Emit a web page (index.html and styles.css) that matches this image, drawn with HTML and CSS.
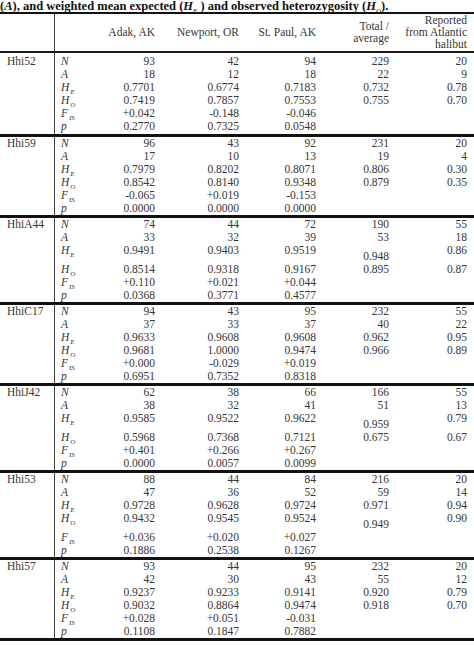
FILE: index.html
```html
<!DOCTYPE html>
<html>
<head>
<meta charset="utf-8">
<link rel="stylesheet" href="styles.css">
</head>
<body>
<div class="page">
  <div class="title">(<i>A</i>), and weighted mean expected (<i>H</i><sub>E</sub> ) and observed heterozygosity (<i>H</i><sub>O</sub>).</div>
  <div class="head">
    <div class="c name"></div>
    <div class="c par"></div>
    <div class="c h">Adak, AK</div>
    <div class="c h">Newport, OR</div>
    <div class="c h">St. Paul, AK</div>
    <div class="c h">Total /<br>average</div>
    <div class="c h">Reported<br>from Atlantic<br>halibut</div>
  </div>

  <div class="blk first">
    <div class="name">Hhi52</div>
    <div class="par"><i>N</i></div><div class="v">93</div><div class="v">42</div><div class="v">94</div><div class="v">229</div><div class="v">20</div>
    <div class="par"><i>A</i></div><div class="v">18</div><div class="v">12</div><div class="v">18</div><div class="v">22</div><div class="v">9</div>
    <div class="par"><i>H</i><sub>E</sub></div><div class="v">0.7701</div><div class="v">0.6774</div><div class="v">0.7183</div><div class="v">0.732</div><div class="v">0.78</div>
    <div class="par"><i>H</i><sub>O</sub></div><div class="v">0.7419</div><div class="v">0.7857</div><div class="v">0.7553</div><div class="v">0.755</div><div class="v">0.70</div>
    <div class="par"><i>F</i><sub>IS</sub></div><div class="v">+0.042</div><div class="v">-0.148</div><div class="v">-0.046</div><div class="v"></div><div class="v"></div>
    <div class="par"><i>p</i></div><div class="v">0.2770</div><div class="v">0.7325</div><div class="v">0.0548</div><div class="v"></div><div class="v"></div>
  </div>

  <div class="blk">
    <div class="name">Hhi59</div>
    <div class="par"><i>N</i></div><div class="v">96</div><div class="v">43</div><div class="v">92</div><div class="v">231</div><div class="v">20</div>
    <div class="par"><i>A</i></div><div class="v">17</div><div class="v">10</div><div class="v">13</div><div class="v">19</div><div class="v">4</div>
    <div class="par"><i>H</i><sub>E</sub></div><div class="v">0.7979</div><div class="v">0.8202</div><div class="v">0.8071</div><div class="v">0.806</div><div class="v">0.30</div>
    <div class="par"><i>H</i><sub>O</sub></div><div class="v">0.8542</div><div class="v">0.8140</div><div class="v">0.9348</div><div class="v">0.879</div><div class="v">0.35</div>
    <div class="par"><i>F</i><sub>IS</sub></div><div class="v">-0.065</div><div class="v">+0.019</div><div class="v">-0.153</div><div class="v"></div><div class="v"></div>
    <div class="par"><i>p</i></div><div class="v">0.0000</div><div class="v">0.0000</div><div class="v">0.0000</div><div class="v"></div><div class="v"></div>
  </div>

  <div class="blk tall3">
    <div class="name">HhiA44</div>
    <div class="par"><i>N</i></div><div class="v">74</div><div class="v">44</div><div class="v">72</div><div class="v">190</div><div class="v">55</div>
    <div class="par"><i>A</i></div><div class="v">33</div><div class="v">32</div><div class="v">39</div><div class="v">53</div><div class="v">18</div>
    <div class="par"><i>H</i><sub>E</sub></div><div class="v">0.9491</div><div class="v">0.9403</div><div class="v">0.9519</div><div class="v lo">0.948</div><div class="v">0.86</div>
    <div class="par"><i>H</i><sub>O</sub></div><div class="v">0.8514</div><div class="v">0.9318</div><div class="v">0.9167</div><div class="v">0.895</div><div class="v">0.87</div>
    <div class="par"><i>F</i><sub>IS</sub></div><div class="v">+0.110</div><div class="v">+0.021</div><div class="v">+0.044</div><div class="v"></div><div class="v"></div>
    <div class="par"><i>p</i></div><div class="v">0.0368</div><div class="v">0.3771</div><div class="v">0.4577</div><div class="v"></div><div class="v"></div>
  </div>

  <div class="blk">
    <div class="name">HhiC17</div>
    <div class="par"><i>N</i></div><div class="v">94</div><div class="v">43</div><div class="v">95</div><div class="v">232</div><div class="v">55</div>
    <div class="par"><i>A</i></div><div class="v">37</div><div class="v">33</div><div class="v">37</div><div class="v">40</div><div class="v">22</div>
    <div class="par"><i>H</i><sub>E</sub></div><div class="v">0.9633</div><div class="v">0.9608</div><div class="v">0.9608</div><div class="v">0.962</div><div class="v">0.95</div>
    <div class="par"><i>H</i><sub>O</sub></div><div class="v">0.9681</div><div class="v">1.0000</div><div class="v">0.9474</div><div class="v">0.966</div><div class="v">0.89</div>
    <div class="par"><i>F</i><sub>IS</sub></div><div class="v">+0.000</div><div class="v">-0.029</div><div class="v">+0.019</div><div class="v"></div><div class="v"></div>
    <div class="par"><i>p</i></div><div class="v">0.6951</div><div class="v">0.7352</div><div class="v">0.8318</div><div class="v"></div><div class="v"></div>
  </div>

  <div class="blk tall3">
    <div class="name">HhiJ42</div>
    <div class="par"><i>N</i></div><div class="v">62</div><div class="v">38</div><div class="v">66</div><div class="v">166</div><div class="v">55</div>
    <div class="par"><i>A</i></div><div class="v">38</div><div class="v">32</div><div class="v">41</div><div class="v">51</div><div class="v">13</div>
    <div class="par"><i>H</i><sub>E</sub></div><div class="v">0.9585</div><div class="v">0.9522</div><div class="v">0.9622</div><div class="v lo">0.959</div><div class="v">0.79</div>
    <div class="par"><i>H</i><sub>O</sub></div><div class="v">0.5968</div><div class="v">0.7368</div><div class="v">0.7121</div><div class="v">0.675</div><div class="v">0.67</div>
    <div class="par"><i>F</i><sub>IS</sub></div><div class="v">+0.401</div><div class="v">+0.266</div><div class="v">+0.267</div><div class="v"></div><div class="v"></div>
    <div class="par"><i>p</i></div><div class="v">0.0000</div><div class="v">0.0057</div><div class="v">0.0099</div><div class="v"></div><div class="v"></div>
  </div>

  <div class="blk tall4">
    <div class="name">Hhi53</div>
    <div class="par"><i>N</i></div><div class="v">88</div><div class="v">44</div><div class="v">84</div><div class="v">216</div><div class="v">20</div>
    <div class="par"><i>A</i></div><div class="v">47</div><div class="v">36</div><div class="v">52</div><div class="v">59</div><div class="v">14</div>
    <div class="par"><i>H</i><sub>E</sub></div><div class="v">0.9728</div><div class="v">0.9628</div><div class="v">0.9724</div><div class="v">0.971</div><div class="v">0.94</div>
    <div class="par"><i>H</i><sub>O</sub></div><div class="v">0.9432</div><div class="v">0.9545</div><div class="v">0.9524</div><div class="v lo">0.949</div><div class="v">0.90</div>
    <div class="par"><i>F</i><sub>IS</sub></div><div class="v">+0.036</div><div class="v">+0.020</div><div class="v">+0.027</div><div class="v"></div><div class="v"></div>
    <div class="par"><i>p</i></div><div class="v">0.1886</div><div class="v">0.2538</div><div class="v">0.1267</div><div class="v"></div><div class="v"></div>
  </div>

  <div class="blk last">
    <div class="name">Hhi57</div>
    <div class="par"><i>N</i></div><div class="v">93</div><div class="v">44</div><div class="v">95</div><div class="v">232</div><div class="v">20</div>
    <div class="par"><i>A</i></div><div class="v">42</div><div class="v">30</div><div class="v">43</div><div class="v">55</div><div class="v">12</div>
    <div class="par"><i>H</i><sub>E</sub></div><div class="v">0.9237</div><div class="v">0.9233</div><div class="v">0.9141</div><div class="v">0.920</div><div class="v">0.79</div>
    <div class="par"><i>H</i><sub>O</sub></div><div class="v">0.9032</div><div class="v">0.8864</div><div class="v">0.9474</div><div class="v">0.918</div><div class="v">0.70</div>
    <div class="par"><i>F</i><sub>IS</sub></div><div class="v">+0.028</div><div class="v">+0.051</div><div class="v">-0.031</div><div class="v"></div><div class="v"></div>
    <div class="par"><i>p</i></div><div class="v">0.1108</div><div class="v">0.1847</div><div class="v">0.7882</div><div class="v"></div><div class="v"></div>
  </div>
</div>
</body>
</html>
```
FILE: styles.css
```css
html, body {
  margin: 0;
  padding: 0;
  background: #fff;
}
body {
  width: 474px;
  height: 645px;
  overflow: hidden;
  font-family: "Liberation Serif", "Times New Roman", serif;
  color: #363636;
}
.page {
  width: 474px;
}
.title {
  height: 12px;
  font-size: 12.5px;
  line-height: 12px;
  font-weight: bold;
  color: #111;
  white-space: nowrap;
}
.title sub {
  font-size: 7px;
  line-height: 0;
  vertical-align: -3px;
  font-weight: normal;
  font-style: italic;
}
.head,
.blk {
  display: grid;
  grid-template-columns: 55px 45px 55px 84px 77px 73px 78px;
  font-size: 11.5px;
  line-height: 13px;
}
.head {
  border-top: 2px solid #111;
  border-bottom: 2px solid #1a1a1a;
  height: 37px;
}
.head .c {
  display: flex;
  flex-direction: column;
  justify-content: center;
  text-align: right;
  line-height: 12px;
}
.head .name {
  border-right: 1px solid #444;
}
.blk {
  grid-template-rows: repeat(6, 13px);
  border-top: 3px solid #111;
}
.blk.first {
  border-top: none;
  padding-top: 2px;
  padding-bottom: 1px;
}
.blk.tall3 {
  grid-template-rows: 13px 13px 19px 13px 13px 13px;
}
.blk.tall4 {
  grid-template-rows: 13px 13px 13px 19px 13px 13px;
}
.blk.last {
  border-bottom: 3px solid #111;
}
.name {
  grid-row: 1 / span 6;
  border-right: 1px solid #444;
  padding-left: 7px;
}
.blk.first .name {
  margin-top: -2px;
  padding-top: 2px;
  margin-bottom: -1px;
}
.par {
  padding-left: 6px;
  white-space: nowrap;
}
.par sub {
  font-size: 7px;
  line-height: 0;
  vertical-align: -3px;
  font-style: italic;
  margin-left: 1px;
}
.v {
  text-align: right;
  white-space: nowrap;
}
.v.lo {
  align-self: end;
}
```
